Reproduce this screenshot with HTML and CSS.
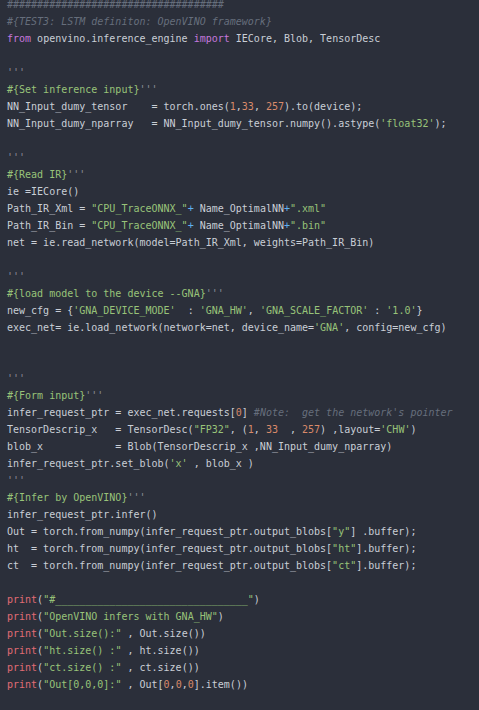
FILE: index.html
```html
<!DOCTYPE html>
<html>
<head>
<meta charset="utf-8">
<link rel="stylesheet" href="styles.css">
</head>
<body>
<pre class="code"><span class="c">####################################</span>
<span class="c i">#{TEST3: LSTM definiton: OpenVINO framework}</span>
<span class="k">from</span> openvino.inference_engine <span class="k">import</span> IECore, Blob, TensorDesc

<span class="q">'''</span>
<span class="s">#{Set inference input}</span><span class="q">'''</span>
NN_Input_dumy_tensor    = torch.ones(<span class="n">1</span>,<span class="n">33</span>, <span class="n">257</span>).to(device);
NN_Input_dumy_nparray   = NN_Input_dumy_tensor.numpy().astype(<span class="s">'float32'</span>);

<span class="q">'''</span>
<span class="s">#{Read IR}</span><span class="q">'''</span>
ie =IECore()
Path_IR_Xml = <span class="s">"CPU_TraceONNX_"</span><span class="o">+</span> Name_OptimalNN<span class="o">+</span><span class="s">".xml"</span>
Path_IR_Bin = <span class="s">"CPU_TraceONNX_"</span><span class="o">+</span> Name_OptimalNN<span class="o">+</span><span class="s">".bin"</span>
net = ie.read_network(model=Path_IR_Xml, weights=Path_IR_Bin)

<span class="q">'''</span>
<span class="s">#{load model to the device --GNA}</span><span class="q">'''</span>
new_cfg = {<span class="s">'GNA_DEVICE_MODE'</span>  : <span class="s">'GNA_HW'</span>, <span class="s">'GNA_SCALE_FACTOR'</span> : <span class="s">'1.0'</span>}
exec_net= ie.load_network(network=net, device_name=<span class="s">'GNA'</span>, config=new_cfg)


<span class="q">'''</span>
<span class="s">#{Form input}</span><span class="q">'''</span>
infer_request_ptr = exec_net.requests[<span class="n">0</span>] <span class="c i">#Note:  get the network's pointer</span>
TensorDescrip_x   = TensorDesc(<span class="s">"FP32"</span>, (<span class="n">1</span>, <span class="n">33</span>  , <span class="n">257</span>) ,layout=<span class="s">'CHW'</span>)
blob_x            = Blob(TensorDescrip_x ,NN_Input_dumy_nparray)
infer_request_ptr.set_blob(<span class="s">'x'</span> , blob_x )
<span class="q">'''</span>
<span class="s">#{Infer by OpenVINO}</span><span class="q">'''</span>
infer_request_ptr.infer()
Out = torch.from_numpy(infer_request_ptr.output_blobs[<span class="s">"y"</span>] .buffer);
ht  = torch.from_numpy(infer_request_ptr.output_blobs[<span class="s">"ht"</span>].buffer);
ct  = torch.from_numpy(infer_request_ptr.output_blobs[<span class="s">"ct"</span>].buffer);

<span class="f">print</span>(<span class="s">"#________________________________"</span>)
<span class="f">print</span>(<span class="s">"OpenVINO infers with GNA_HW"</span>)
<span class="f">print</span>(<span class="s">"Out.size():"</span> , Out.size())
<span class="f">print</span>(<span class="s">"ht.size() :"</span> , ht.size())
<span class="f">print</span>(<span class="s">"ct.size() :"</span> , ct.size())
<span class="f">print</span>(<span class="s">"Out[0,0,0]:"</span> , Out[<span class="n">0</span>,<span class="n">0</span>,<span class="n">0</span>].item())</pre>
</body>
</html>
```

FILE: styles.css
```css
html, body {
  margin: 0;
  padding: 0;
  background: #2b2f3a;
  height: 100%;
  overflow: hidden;
}

.code {
  margin: -4px 0 0 0;
  padding: 0 0 0 7px;
  font-family: "DejaVu Sans Mono", "Liberation Mono", monospace;
  font-size: 10px;
  line-height: 17px;
  color: #c9ced6;
  white-space: pre;
}

.c { color: #666e7c; }
.i { font-style: italic; }
.k { color: #c678dd; }
.f { color: #e06c75; }
.s { color: #98c379; }
.n { color: #d98a6a; }
.o { color: #61afef; }
.q { color: #8b8f99; }
```
